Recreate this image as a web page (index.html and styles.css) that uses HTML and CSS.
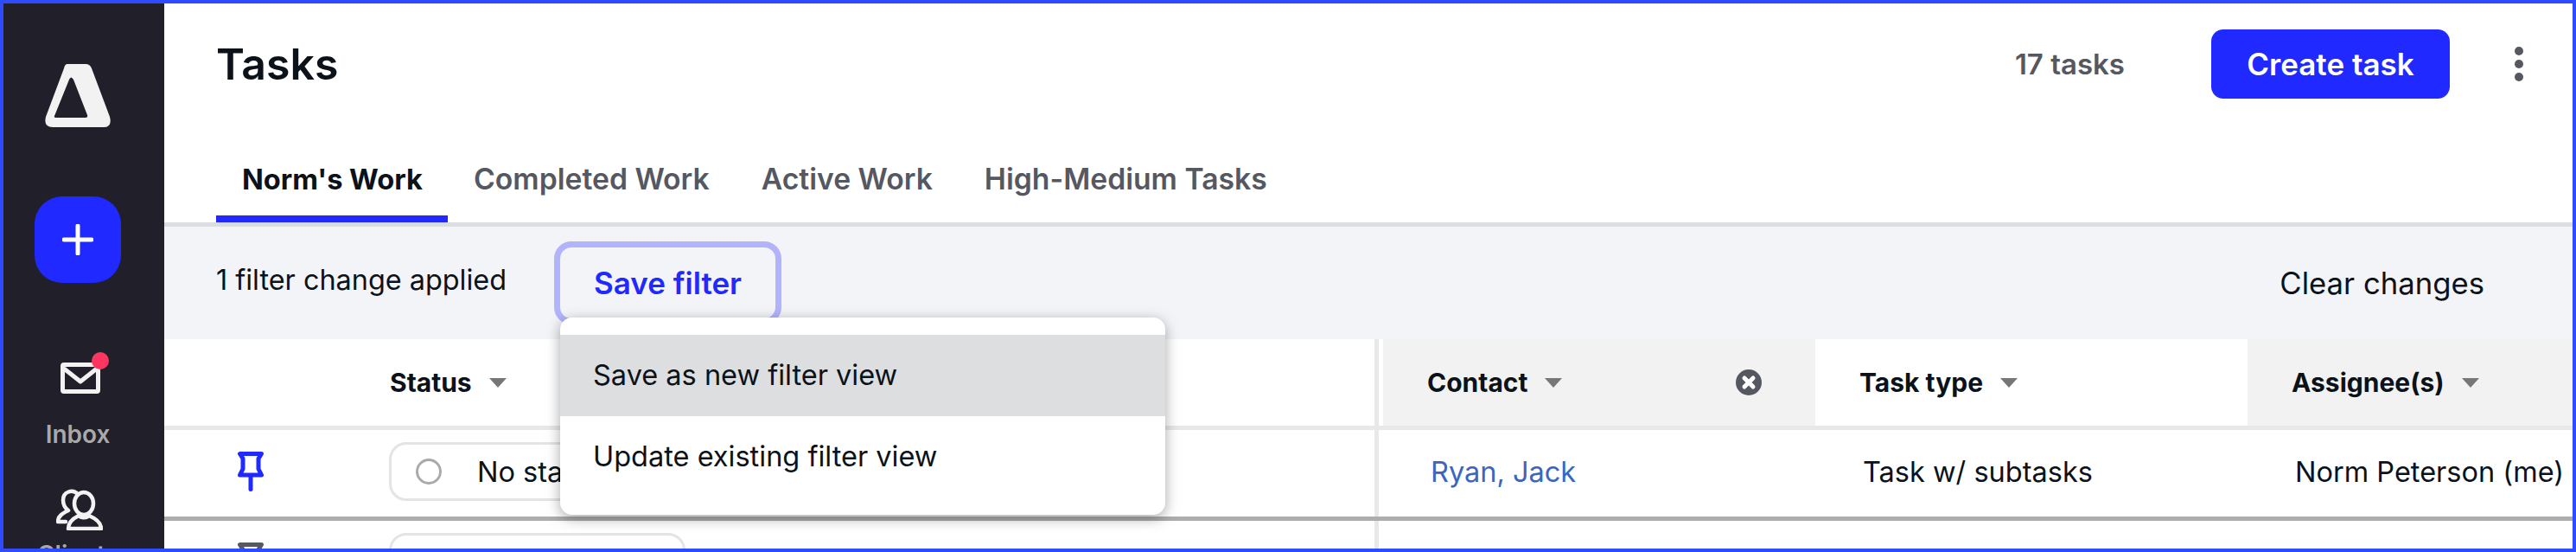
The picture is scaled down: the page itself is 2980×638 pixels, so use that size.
FILE: index.html
```html
<!DOCTYPE html>
<html lang="en">
<head>
    <meta charset="UTF-8">
    <title>Tasks</title>
    <link rel="stylesheet" href="styles.css">
</head>
<body>
    <div class="sidebar">
        <svg class="logo" width="76" height="73" viewBox="0 0 76 73">
            <path fill="#f2f2f2" fill-rule="evenodd" d="M26 0H47Q52 0 54 5L75 61Q78 73 68 73H9Q-2 73 1 61L22 5Q23 0 26 0ZM28 18L11 60Q10 62 13 62H47Q50 62 49 59L33 18Q30 13 28 18Z"/>
        </svg>
        <button class="add-btn">
            <svg width="36" height="36" viewBox="0 0 36 36"><path d="M18 2V34M2 18H34" stroke="#fff" stroke-width="5" stroke-linecap="round"/></svg>
        </button>
        <div class="nav-item inbox">
            <span class="nav-icon">
                <svg width="46" height="36" viewBox="0 0 46 36" fill="none" stroke="#f2f2f2" stroke-width="5" stroke-linejoin="round"><rect x="2.5" y="2.5" width="41" height="31" rx="1.5"/><path d="M4 7L23 22L42 7"/></svg>
                <span class="dot"></span>
            </span>
            <span class="nav-label">Inbox</span>
        </div>
        <div class="nav-item clients">
            <span class="nav-icon">
                <svg width="54" height="48" viewBox="0 0 54 48" fill="none" stroke="#f2f2f2" stroke-width="4.5" stroke-linejoin="round" stroke-linecap="round"><ellipse cx="32" cy="17" rx="11" ry="13"/><path d="M14 46C14 38 20 34 26 31C29 34 35 34 38 31C45 34 52 38 52 46Z"/><path d="M25 6C19 0 8 3 8 13C8 18 10 22 14 25C8 28 2 31 2 38H11"/></svg>
            </span>
            <span class="nav-label">Clients</span>
        </div>
    </div>

    <div class="main">
        <div class="header">
            <h1 class="title">Tasks</h1>
            <span class="count">17 tasks</span>
            <button class="create-btn">Create task</button>
            <div class="more"><i></i><i></i><i></i></div>
        </div>

        <div class="tabs">
            <a class="tab active">Norm's Work</a>
            <a class="tab">Completed Work</a>
            <a class="tab">Active Work</a>
            <a class="tab">High-Medium Tasks</a>
        </div>

        <div class="filter-bar">
            <span class="filter-note">1 filter change applied</span>
            <button class="save-btn">Save filter</button>
            <button class="clear-btn">Clear changes</button>
            <div class="menu">
                <div class="menu-item selected">Save as new filter view</div>
                <div class="menu-item">Update existing filter view</div>
            </div>
        </div>

        <div class="row head">
            <div></div>
            <div class="cell">Status <span class="caret"></span></div>
            <div class="split"></div>
            <div class="cell sorted">Contact <span class="caret"></span>
                <svg class="clear-icon" width="30" height="30" viewBox="0 0 30 30"><circle cx="15" cy="15" r="15" fill="#565861"/><path d="M10 10L20 20M20 10L10 20" stroke="#fff" stroke-width="5" stroke-linecap="round"/></svg>
            </div>
            <div class="cell">Task type <span class="caret"></span></div>
            <div class="cell sorted">Assignee(s) <span class="caret"></span></div>
        </div>

        <div class="row body first">
            <div class="pin-cell">
                <svg width="30" height="46" viewBox="0 0 30 46" fill="none" stroke="#2029ff" stroke-width="5" stroke-linejoin="round" stroke-linecap="round"><path d="M2.5 2.5H27.5L24 8V20L27.5 27H2.5L6 20V8Z"/><path d="M15 28V43.5"/></svg>
            </div>
            <div class="status-cell"><div class="status-pill"><span class="radio"></span>No status</div></div>
            <div class="split"></div>
            <div class="text-cell link">Ryan, Jack</div>
            <div class="text-cell">Task w/ subtasks</div>
            <div class="text-cell">Norm Peterson (me)</div>
        </div>

        <div class="row body">
            <div class="pin-cell">
                <svg width="30" height="46" viewBox="0 0 30 46" fill="none" stroke="#565861" stroke-width="5" stroke-linejoin="round" stroke-linecap="round"><path d="M2.5 2.5H27.5L24 8V20L27.5 27H2.5L6 20V8Z"/><path d="M15 28V43.5"/></svg>
            </div>
            <div class="status-cell"><div class="status-pill"></div></div>
            <div class="split"></div>
            <div class="text-cell"></div>
            <div class="text-cell"></div>
            <div class="text-cell"></div>
        </div>
    </div>
</body>
</html>
```

FILE: styles.css
```css
* {
    box-sizing: border-box;
}

html, body {
    margin: 0;
    height: 100%;
}

body {
    display: flex;
    height: 100vh;
    border: 4px solid #2f4bff;
    overflow: hidden;
    font-family: Inter, "Liberation Sans", sans-serif;
    color: #0b1219;
    background: #fff;
}

button {
    font-family: inherit;
    border: none;
    background: none;
    padding: 0;
}

/* sidebar */
.sidebar {
    width: 186px;
    flex-shrink: 0;
    display: flex;
    flex-direction: column;
    align-items: center;
    padding: 70px 14px 0 0;
    background: #201f2a;
    overflow: hidden;
}

.logo {
    display: block;
    flex-shrink: 0;
}

.add-btn {
    width: 100px;
    height: 100px;
    flex-shrink: 0;
    margin-top: 80px;
    display: flex;
    align-items: center;
    justify-content: center;
    background: #2029ff;
    border-radius: 32px;
}

.add-btn svg {
    display: block;
}

.nav-item {
    display: flex;
    flex-direction: column;
    align-items: center;
    flex-shrink: 0;
}

.inbox {
    margin-top: 92px;
}

.clients {
    margin-top: 46px;
}

.nav-icon {
    position: relative;
    display: block;
    margin-left: 5px;
    line-height: 0;
}

.dot {
    position: absolute;
    top: -12px;
    right: -10px;
    width: 20px;
    height: 20px;
    border-radius: 50%;
    background: #ff3561;
}

.nav-label {
    margin-top: 30px;
    font-size: 28px;
    line-height: 34px;
    font-weight: 600;
    color: #a9a9a9;
}

.clients .nav-label {
    margin-top: 11px;
}

/* header */
.main {
    flex: 1;
    min-width: 0;
    position: relative;
}

.header {
    display: flex;
    align-items: center;
    height: 80px;
    margin-top: 30px;
    padding-left: 60px;
}

.title {
    margin: 0;
    font-size: 50px;
    font-weight: 600;
}

.count {
    margin-left: auto;
    margin-right: 100px;
    font-size: 33px;
    font-weight: 600;
    color: #565861;
}

.create-btn {
    width: 276px;
    height: 80px;
    border-radius: 14px;
    background: #2029ff;
    color: #fff;
    font-size: 35px;
    font-weight: 600;
}

.more {
    display: flex;
    flex-direction: column;
    gap: 5px;
    margin: 0 57px 0 75px;
}

.more i {
    display: block;
    width: 10px;
    height: 10px;
    border-radius: 50%;
    background: #565861;
}

/* tabs */
.tabs {
    display: flex;
    height: 78px;
    margin-top: 65px;
    padding-left: 60px;
}

.tab {
    height: 78px;
    padding: 8px 30px 0;
    line-height: 40px;
    font-size: 33.7px;
    font-weight: 600;
    color: #565861;
}

.tab.active {
    width: 268px;
    color: #0b1219;
    font-size: 32.6px;
    font-weight: 700;
    white-space: nowrap;
    border-bottom: 8px solid #2029ff;
}

/* filter bar */
.filter-bar {
    position: relative;
    display: flex;
    align-items: center;
    height: 135px;
    padding: 0 102px 0 60px;
    border-top: 5px solid #dcdde0;
    background: #f3f4f8;
}

.filter-note {
    font-size: 32.4px;
    margin-bottom: 8px;
}

.save-btn {
    width: 263px;
    height: 96px;
    margin-left: 55px;
    border: 7px solid #b1b4fa;
    border-radius: 20px;
    color: #2029ff;
    font-size: 35px;
    font-weight: 600;
}

.clear-btn {
    margin-left: auto;
    font-size: 34.7px;
    color: #0b1219;
}

.menu {
    position: absolute;
    z-index: 5;
    top: 105px;
    left: 458px;
    width: 700px;
    padding: 20px 0;
    border-radius: 14px;
    background: #fff;
    box-shadow: 0 4px 16px rgba(0, 0, 0, 0.35);
}

.menu-item {
    height: 94px;
    padding: 0 38px;
    line-height: 94px;
    font-size: 32.5px;
}

.menu-item.selected {
    background: #dddee0;
}

/* table */
.row {
    display: grid;
    grid-template-columns: 260px 1140px 10px 500px 500px 376px;
    height: 105px;
    border-bottom: 5px solid #e8e8e8;
}

.row.body.first {
    border-bottom-color: #adadad;
}

.split {
    border-left: 5px solid #e8e8e8;
}

.cell {
    position: relative;
    display: flex;
    align-items: center;
    gap: 14px;
    padding-left: 51px;
    font-size: 30px;
    font-weight: 700;
}

.cell:nth-child(2) {
    padding-left: 1px;
}

.cell.sorted {
    background: #f2f2f2;
}

.caret {
    width: 0;
    height: 0;
    margin-left: 6px;
    border-left: 10px solid transparent;
    border-right: 10px solid transparent;
    border-top: 11px solid #777;
}

.clear-icon {
    position: absolute;
    top: 35px;
    right: 62px;
}

.pin-cell {
    padding: 25px 0 0 85px;
}

.pin-cell svg {
    display: block;
}

.status-cell {
    padding-top: 14px;
}

.status-pill {
    display: flex;
    align-items: center;
    width: 343px;
    height: 68px;
    padding-left: 28px;
    border: 3px solid #e4e4e4;
    border-radius: 20px;
    font-size: 32.5px;
}

.radio {
    width: 30px;
    height: 30px;
    margin-right: 41px;
    border: 3px solid #aaa;
    border-radius: 50%;
}

.text-cell {
    padding-left: 55px;
    line-height: 98px;
    font-size: 32.5px;
    white-space: nowrap;
}

.link {
    color: #3a66c0;
}
```
